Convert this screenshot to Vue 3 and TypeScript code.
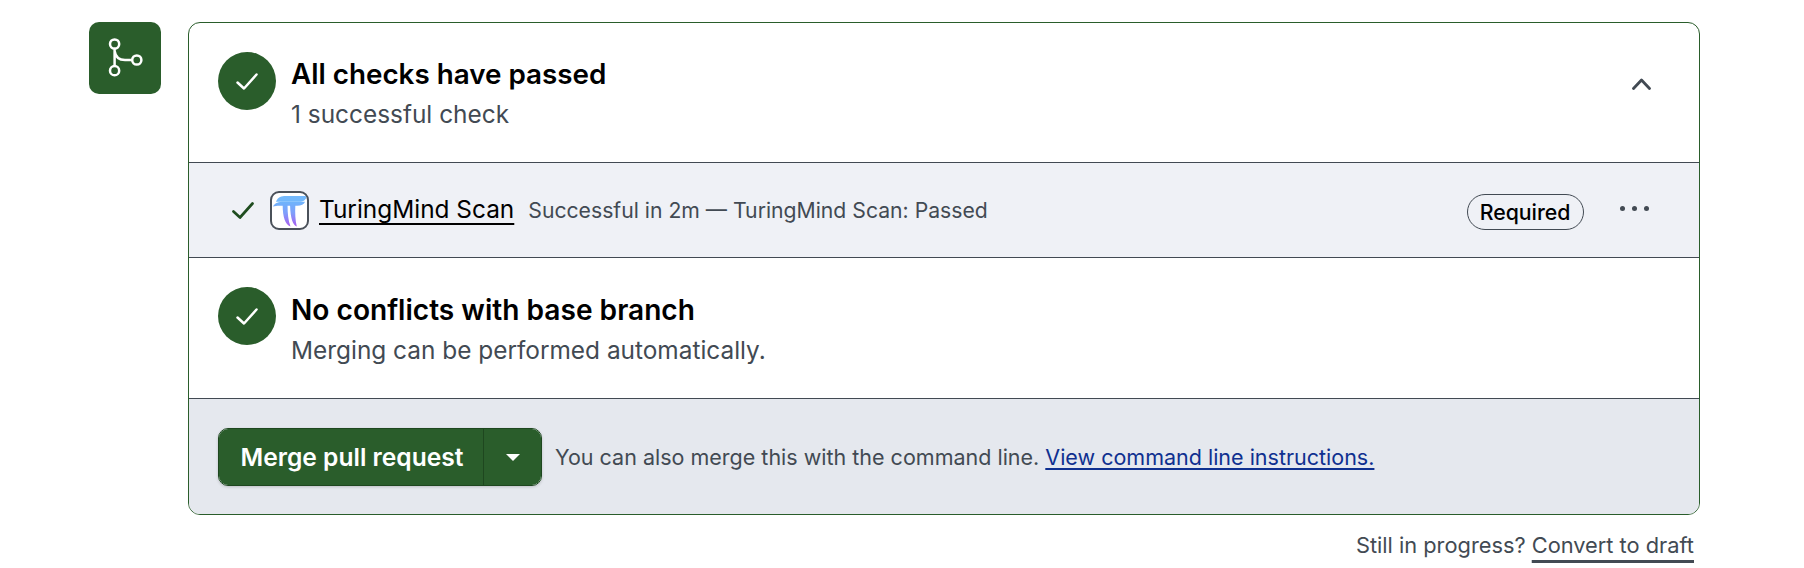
<script setup lang="ts">
const sections = { title: 'All checks have passed' }
</script>

<template>
  <div class="page">
    <div class="badge">
      <svg width="36" height="44" viewBox="0 0 36 44" fill="none" stroke="#fff" stroke-width="2.5">
        <circle cx="7.6" cy="8" r="4.6" />
        <circle cx="7.6" cy="34.7" r="4.6" />
        <circle cx="29.8" cy="24" r="4.6" />
        <path d="M7.6 12.6V30.1M7.6 15C8.5 21 12 24 18 24H25.2" />
      </svg>
    </div>
    <div class="column">
      <div class="card">
        <section class="head">
          <div class="circle">
            <svg width="22" height="17" viewBox="0 0 22 17" fill="none" stroke="#fff" stroke-width="2.5" stroke-linecap="round" stroke-linejoin="round"><path d="M1.5 9.5L8 15.5L20.5 1.5" /></svg>
          </div>
          <div class="copy">
            <div class="title">{{ sections.title }}</div>
            <div class="sub">1 successful check</div>
          </div>
          <svg class="chev" width="19" height="12" viewBox="0 0 19 12" fill="none" stroke="#424a53" stroke-width="2.8" stroke-linecap="round" stroke-linejoin="round"><path d="M1.5 10.5L9.5 2L17.5 10.5" /></svg>
        </section>
        <section class="check">
          <svg class="tick" width="22" height="17" viewBox="0 0 22 17" fill="none" stroke="#1f4d1f" stroke-width="2.7" stroke-linecap="round" stroke-linejoin="round"><path d="M1.5 9.5L8 15.5L20.5 1.5" /></svg>
          <div class="logo">
            <svg width="35" height="35" viewBox="0 0 36 36">
              <defs>
                <linearGradient id="tg" x1="0" y1="0" x2="0" y2="1">
                  <stop offset="0" stop-color="#6fb4fb" />
                  <stop offset="0.45" stop-color="#7f9ffb" />
                  <stop offset="1" stop-color="#a85cf0" />
                </linearGradient>
              </defs>
              <path d="M4 9C6 4 10 3 14 3H36C35 7 32 9 28 9H13C9 9 6 9 4 9Z" fill="#73b8fb" />
              <path d="M1 14C3 10 7 9 12 9H34C33 12 30 13 26 13H24C23.6 20 24 28 25.5 34.5C21.5 33 19 26 18.6 13H16C16 20 16.6 28 19 34.5C13.5 33 11 24 11 13.2C7 13 4 13 1 14Z" fill="url(#tg)" />
            </svg>
          </div>
          <a class="name">TuringMind Scan</a>
          <span class="status">Successful in 2m — TuringMind Scan: Passed</span>
          <span class="pill">Required</span>
          <span class="dots"><i /><i /><i /></span>
        </section>
        <section class="head second">
          <div class="circle">
            <svg width="22" height="17" viewBox="0 0 22 17" fill="none" stroke="#fff" stroke-width="2.5" stroke-linecap="round" stroke-linejoin="round"><path d="M1.5 9.5L8 15.5L20.5 1.5" /></svg>
          </div>
          <div class="copy">
            <div class="title wide">No conflicts with base branch</div>
            <div class="sub">Merging can be performed automatically.</div>
          </div>
        </section>
        <section class="foot">
          <div class="merge">
            <button class="main">Merge pull request</button>
            <button class="drop"><span class="caret" /></button>
          </div>
          <span class="hint">You can also merge this with the command line.</span>
          <a class="cli">View command line instructions.</a>
        </section>
      </div>
      <div class="draft">Still in progress? <a>Convert to draft</a></div>
    </div>
  </div>
</template>

<style>
html, body { margin: 0; background: #fff; }
</style>

<style scoped>
.page {
  width: 1804px;
  height: 568px;
  box-sizing: border-box;
  padding: 22px 104px 0 89px;
  display: flex;
  gap: 27px;
  font-family: Inter, "Liberation Sans", sans-serif;
  overflow: hidden;
}
.badge {
  width: 72px;
  height: 72px;
  flex: none;
  border-radius: 10px;
  background: #2a5d2b;
  display: flex;
  align-items: center;
  justify-content: center;
}
.column { flex: 1; display: flex; flex-direction: column; }
.card {
  height: 493px;
  box-sizing: border-box;
  border: 1.5px solid #2a5d2b;
  border-radius: 12px;
  overflow: hidden;
  display: flex;
  flex-direction: column;
}
.head {
  height: 139px;
  flex: none;
  box-sizing: border-box;
  padding: 29px 0 0 29px;
  display: flex;
  align-items: flex-start;
  gap: 15px;
  position: relative;
}
.second { height: 140px; }
.second .copy { margin-top: 1px; }
.circle {
  width: 58px;
  height: 58px;
  flex: none;
  border-radius: 50%;
  background: #2a5d2b;
  display: flex;
  align-items: center;
  justify-content: center;
}
.title { font-size: 27.8px; font-weight: 600; line-height: 34px; color: #000; margin-top: 5px; }
.wide { font-size: 28.1px; }
.sub { font-size: 24.4px; line-height: 32px; color: #424a53; margin-top: 7px; }
.chev { position: absolute; right: 48px; top: 55px; }
.check {
  height: 96px;
  flex: none;
  box-sizing: border-box;
  background: #eff1f6;
  border-top: 1.5px solid #424a53;
  border-bottom: 1.5px solid #424a53;
  display: flex;
  align-items: center;
  padding: 0 50px 0 43px;
}
.tick { flex: none; margin-right: 16px; }
.logo {
  width: 39px;
  height: 39px;
  flex: none;
  box-sizing: border-box;
  border: 2px solid #4a515a;
  border-radius: 9px;
  background: #fff;
  overflow: hidden;
  margin-right: 10px;
}
.logo svg { display: block; }
.name { font-size: 24.4px; color: #000; text-decoration: underline; text-underline-offset: 5px; text-decoration-thickness: 2px; margin-right: 14px; margin-top: -2px; }
.status { font-size: 21.2px; color: #424a53; flex: 1; }
.pill {
  height: 36px;
  box-sizing: border-box;
  padding: 0 12px;
  border: 1px solid #424a53;
  border-radius: 18px;
  display: flex;
  align-items: center;
  font-size: 21.3px;
  font-weight: 500;
  color: #000;
  margin-right: 36px;
  margin-top: 4px;
}
.dots { display: flex; gap: 6.5px; margin-top: -3px; }
.dots i { width: 5.5px; height: 5.5px; border-radius: 50%; background: #424a53; }
.foot {
  flex: 1;
  box-sizing: border-box;
  background: #e5e8ee;
  border-top: 1.5px solid #424a53;
  display: flex;
  align-items: center;
  padding: 0 0 0 29px;
}
.merge { display: flex; height: 58px; box-sizing: border-box; border: 1px solid #1e471f; border-radius: 10px; overflow: hidden; box-shadow: 0 1px 3px rgba(0,0,0,.18); margin-right: 13px; }
.merge button { border: none; background: #2a5d2b; color: #fff; font-family: inherit; padding: 0; }
.main { width: 265px; padding-left: 2px !important; font-size: 24.6px; font-weight: 600; border-right: 1px solid #1e471f !important; }
.drop { width: 57px; display: flex; align-items: center; justify-content: center; }
.caret { width: 0; height: 0; margin-top: 2px; border-left: 7px solid transparent; border-right: 7px solid transparent; border-top: 7.5px solid #fff; }
.hint { font-size: 21.5px; color: #424a53; margin-right: 6px; }
.cli { font-size: 21.5px; color: #0f3090; text-decoration: underline; text-underline-offset: 3px; }
.draft { text-align: right; font-size: 21.8px; color: #424a53; margin-top: 17px; padding-right: 6px; }
.draft a { text-decoration: underline; text-decoration-color: #424a53; text-underline-offset: 7px; text-decoration-thickness: 2.5px; }
</style>
